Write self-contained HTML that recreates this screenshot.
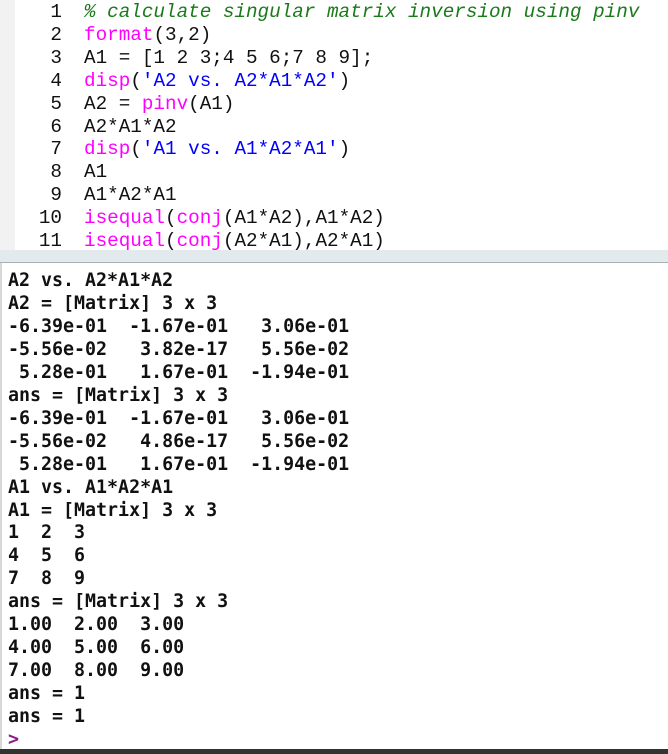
<!DOCTYPE html>
<html><head><meta charset="utf-8"><style>
html,body{margin:0;padding:0;background:#fff;width:668px;height:754px;overflow:hidden;position:relative}
#gut{position:absolute;left:0;top:0;width:15px;height:250px;background:#f2f2f2}
.ed{position:absolute;left:0;top:0;font-family:"Liberation Mono",monospace;font-size:19.3px;line-height:22.9px;white-space:pre;color:#111}
.ln{position:absolute;left:0;width:62px;text-align:right;color:#111}
.cd{position:absolute;left:84px}
.c{color:#1a7a1a;font-style:italic}
.f{color:#ff00ff}
.s{color:#0000ff}
#band{position:absolute;left:0;top:250px;width:668px;height:12px;background:#e3eaee;border-bottom:1px solid #aab0b5}
#con{position:absolute;left:0;top:263px;width:668px;height:486px;border-left:2px solid #d8d8d8;box-sizing:border-box}
.o{position:absolute;left:8px;top:270px;font-family:"DejaVu Sans Mono","Liberation Mono",monospace;font-weight:bold;font-size:18.3px;line-height:22.95px;white-space:pre;color:#111}
#bar{position:absolute;left:0;top:749px;width:668px;height:5px;background:#333}
</style></head><body>
<div id="gut"></div>
<div class="ed" style="top:1px;width:668px;height:249px">
<div class="ln" style="top:0">1</div><div class="cd" style="top:0"><span class="c">% calculate singular matrix inversion using pinv</span></div>
<div class="ln" style="top:22.9px">2</div><div class="cd" style="top:22.9px"><span class="f">format</span>(3,2)</div>
<div class="ln" style="top:45.8px">3</div><div class="cd" style="top:45.8px">A1 = [1 2 3;4 5 6;7 8 9];</div>
<div class="ln" style="top:68.7px">4</div><div class="cd" style="top:68.7px"><span class="f">disp</span>(<span class="s">'A2 vs. A2*A1*A2'</span>)</div>
<div class="ln" style="top:91.6px">5</div><div class="cd" style="top:91.6px">A2 = <span class="f">pinv</span>(A1)</div>
<div class="ln" style="top:114.5px">6</div><div class="cd" style="top:114.5px">A2*A1*A2</div>
<div class="ln" style="top:137.4px">7</div><div class="cd" style="top:137.4px"><span class="f">disp</span>(<span class="s">'A1 vs. A1*A2*A1'</span>)</div>
<div class="ln" style="top:160.3px">8</div><div class="cd" style="top:160.3px">A1</div>
<div class="ln" style="top:183.2px">9</div><div class="cd" style="top:183.2px">A1*A2*A1</div>
<div class="ln" style="top:206.1px">10</div><div class="cd" style="top:206.1px"><span class="f">isequal</span>(<span class="f">conj</span>(A1*A2),A1*A2)</div>
<div class="ln" style="top:229px">11</div><div class="cd" style="top:229px"><span class="f">isequal</span>(<span class="f">conj</span>(A2*A1),A2*A1)</div>
</div>
<div id="band"></div>
<div id="con"></div>
<div class="o">A2 vs. A2*A1*A2
A2 = [Matrix] 3 x 3
-6.39e-01  -1.67e-01   3.06e-01
-5.56e-02   3.82e-17   5.56e-02
 5.28e-01   1.67e-01  -1.94e-01
ans = [Matrix] 3 x 3
-6.39e-01  -1.67e-01   3.06e-01
-5.56e-02   4.86e-17   5.56e-02
 5.28e-01   1.67e-01  -1.94e-01
A1 vs. A1*A2*A1
A1 = [Matrix] 3 x 3
1  2  3
4  5  6
7  8  9
ans = [Matrix] 3 x 3
1.00  2.00  3.00
4.00  5.00  6.00
7.00  8.00  9.00
ans = 1
ans = 1
<span style="color:#8b1a8b">&gt;</span></div>
<div id="bar"></div>
</body></html>
